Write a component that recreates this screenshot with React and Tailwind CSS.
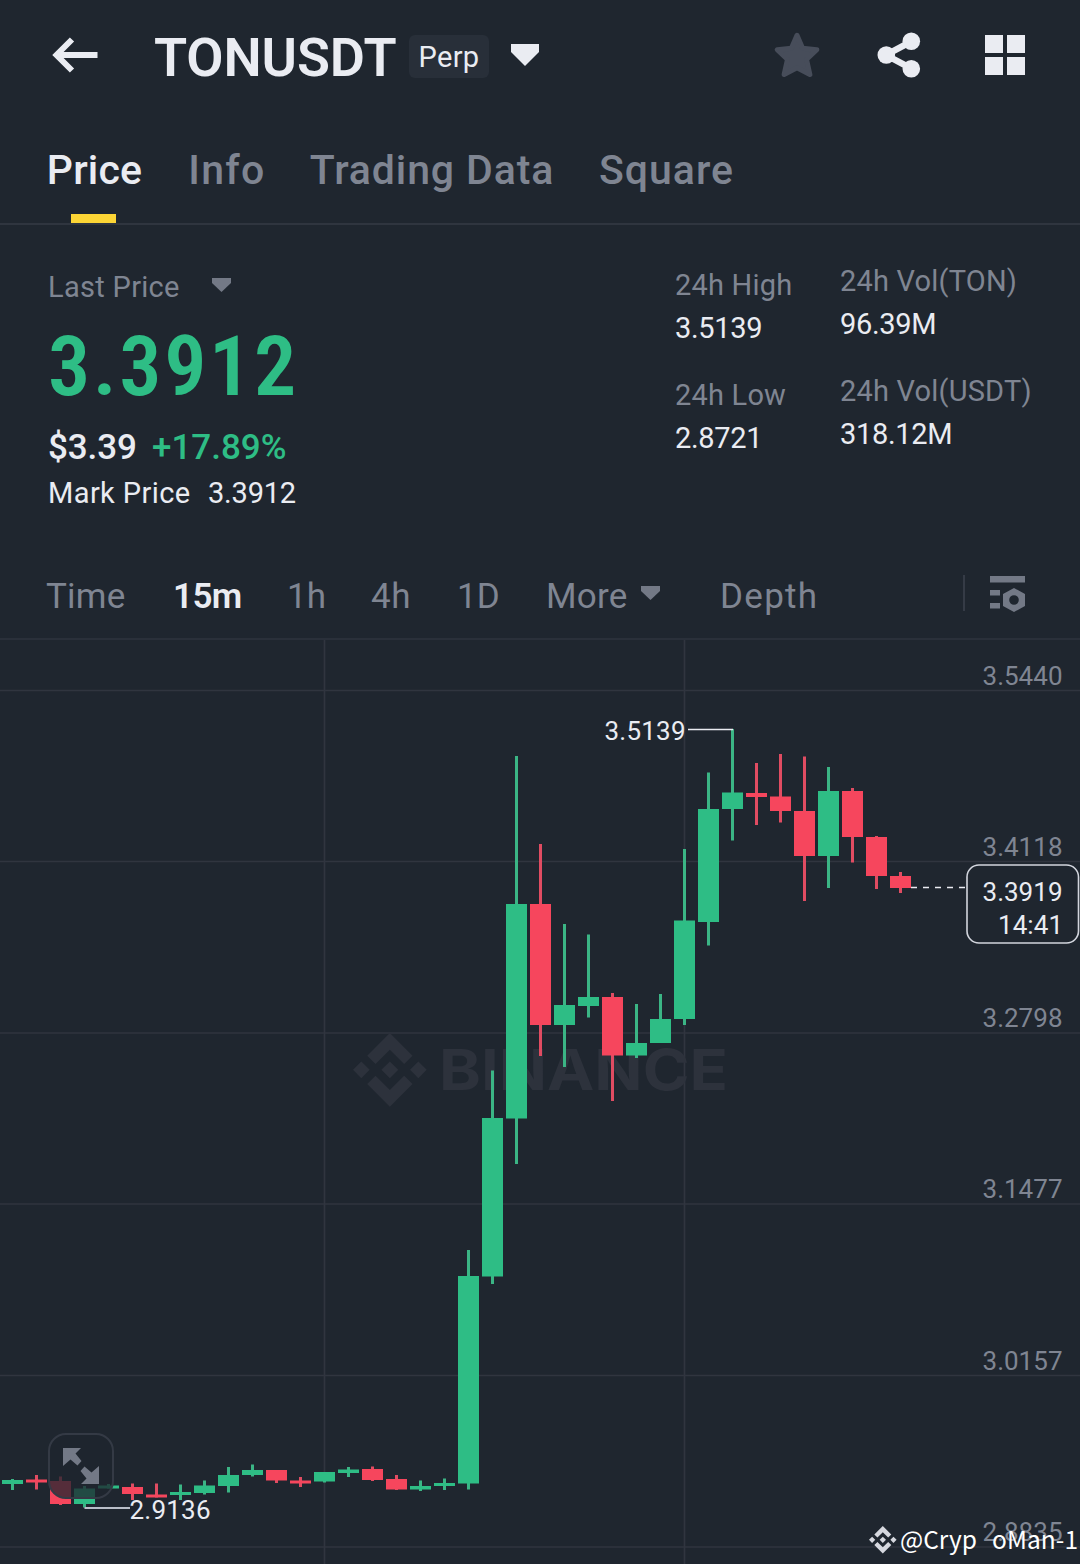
import React, { useState } from "react";

const candles = [
  // [high, body top, body bottom, low, up]
  [1479, 1480, 1484, 1490, true],
  [1475, 1479.5, 1482.5, 1489.5, false],
  [1476.5, 1481, 1504, 1505, false],
  [1486, 1488.5, 1504, 1507.5, true],
  [1484, 1485.5, 1488.5, 1488.5, true],
  [1483.5, 1487, 1494, 1500, false],
  [1483.5, 1494.5, 1497.5, 1497.5, false],
  [1484.5, 1492, 1495, 1500, true],
  [1480.5, 1485.5, 1493, 1494.5, true],
  [1467, 1475, 1486, 1492.5, true],
  [1464.5, 1470, 1475, 1476.5, true],
  [1470, 1470, 1480.5, 1483, false],
  [1477, 1480.5, 1483.5, 1487, false],
  [1472, 1472, 1481.5, 1482.5, true],
  [1467, 1469.5, 1473, 1477, true],
  [1466.5, 1469, 1480, 1481, false],
  [1475, 1479, 1489.5, 1490, false],
  [1480.5, 1486, 1489.5, 1491, true],
  [1478.5, 1483, 1486, 1490, true],
  [1250, 1276, 1483.5, 1489.5, true],
  [1070.5, 1118, 1276.5, 1284, true],
  [756, 904, 1118.5, 1164, true],
  [844, 904, 1025, 1056, false],
  [924, 1005, 1025, 1067, true],
  [934.5, 997, 1006, 1017.5, true],
  [993, 997, 1055.5, 1101, false],
  [1004, 1043, 1055.5, 1058, true],
  [994, 1019, 1043, 1043, true],
  [849, 920.5, 1019, 1025, true],
  [772.5, 809, 922, 945.5, true],
  [729, 792.5, 809, 840.5, true],
  [763, 793, 797, 825, false],
  [754, 796.5, 811, 822.5, false],
  [756.5, 811, 856, 901, false],
  [767, 791, 856, 888, true],
  [788, 791, 837, 862.5, false],
  [836, 837, 876, 889, false],
  [872, 876, 888, 893, false],
];

const axis = [
  { price: "3.5440", y: 690.5 },
  { price: "3.4118", y: 861.5 },
  { price: "3.2798", y: 1033 },
  { price: "3.1477", y: 1204 },
  { price: "3.0157", y: 1375.5 },
  { price: "2.8835", y: 1547 },
];

const BinanceMark = () => (
  <>
    <path d="M38.73 53.2l24.59-24.58 24.6 24.6 14.3-14.31L63.32 0l-38.9 38.9z" />
    <path d="M0 63.31L14.3 49l14.31 14.31-14.31 14.3z" />
    <path d="M38.73 73.41L63.32 98l24.6-24.6 14.31 14.29-38.91 38.91-38.9-38.88z" />
    <path d="M98 63.31L112.3 49l14.31 14.3-14.31 14.32z" />
    <path d="M77.83 63.3L63.32 48.78 48.81 63.28l14.51 14.5z" />
  </>
);

const Caret = ({ className }) => (
  <svg viewBox="0 0 28 22" preserveAspectRatio="none" className={className} fill="currentColor">
    <path d="M0 0h28v8L14 22 0 8z" />
  </svg>
);

const Header = () => {
  return (
    <header className="flex h-28 items-center pl-[52px]">
      <svg width="46" height="36" viewBox="0 0 46 36" className="mb-0.5 shrink-0" fill="none" stroke="currentColor" strokeWidth="6">
        <path d="M20 2.5L4.5 18 20 33.5M4 18h41.5" />
      </svg>
      <h1 className="ml-14 w-[241px] pt-1 whitespace-nowrap text-[54px] leading-[56px] font-semibold tracking-[-0.1px]">
        TONUSDT
      </h1>
      <span className="ml-3.5 flex h-[43px] w-20 items-center justify-center rounded-md bg-[#282f39] pt-1 text-[29px] tracking-[0.3px]">
        Perp
      </span>
      <Caret className="mb-0.5 ml-[22px] h-[22px] w-7" />

      <div className="mb-0.5 ml-[234px] flex items-center">
        <svg width="48" height="48" viewBox="0 0 48 48" fill="#474d5a" stroke="#474d5a" strokeWidth="5" strokeLinejoin="round">
          <path d="M24 4.3l5.6 12.9 14.2 1.5-10.3 9.6 3.4 15.2L24 36.8l-12.9 6.7 3.4-15.2L4.2 18.7l14.2-1.5z" />
        </svg>
        <svg width="44" height="46" viewBox="0 0 44 46" className="ml-14" fill="currentColor">
          <path d="M34.5 9.3L9 23l25.5 13.7" fill="none" stroke="currentColor" strokeWidth="6.5" />
          <circle cx="9.3" cy="23" r="8.8" />
          <circle cx="34.3" cy="9.2" r="8.8" />
          <circle cx="34.3" cy="36.8" r="8.8" />
        </svg>
        <div className="ml-16 grid grid-cols-2 gap-1">
          <i className="h-[18px] w-[18px] bg-current" />
          <i className="h-[18px] w-[18px] bg-current" />
          <i className="h-[18px] w-[18px] bg-current" />
          <i className="h-[18px] w-[18px] bg-current" />
        </div>
      </div>
    </header>
  );
};

const tabs = [
  { name: "Price", style: "w-[94px] mr-[47px] tracking-[0.2px]" },
  { name: "Info", style: "w-[77px] mr-[45px] tracking-[1.3px]" },
  { name: "Trading Data", style: "w-[243px] mr-[45px] tracking-[0.9px]" },
  { name: "Square", style: "w-[136px] tracking-[1px]" },
];

const Tabs = () => {
  const [active, setActive] = useState("Price");

  return (
    <nav className="flex h-[113px] items-end border-b-2 border-[#2f353f] pl-[46px] text-[41px] leading-[48px] font-medium text-[#7f8592]">
      {tabs.map((tab) => (
        <button
          key={tab.name}
          onClick={() => setActive(tab.name)}
          className={`flex flex-col items-center gap-[20px] whitespace-nowrap ${tab.style} ${active === tab.name ? "text-[#eaecf2]" : ""}`}
        >
          <span className="pl-[3px]">{tab.name}</span>
          <span className={`h-[9px] w-[45px] ${active === tab.name ? "bg-[#fcd535]" : ""}`} />
        </button>
      ))}
    </nav>
  );
};

const Stat = ({ label, value }) => (
  <div className="flex h-[110px] flex-col whitespace-nowrap text-[29px] leading-[43px]">
    <span className="tracking-[0.2px] text-[#7f8592]">{label}</span>
    <span className="tracking-[-0.3px]">{value}</span>
  </div>
);

const Summary = () => {
  return (
    <section className="flex h-[328px] justify-between pr-[41px] pl-12">
      <div className="flex flex-col whitespace-nowrap">
        <div className="mt-10 flex items-center text-[29px] leading-[44px] text-[#7f8592]">
          <span className="w-[164px] tracking-[0.3px]">Last Price</span>
          <Caret className="mb-1 h-3.5 w-[19px] text-[#737986]" />
        </div>
        <span className="mt-1.5 text-[84px] leading-[104px] font-semibold tracking-[2.6px] text-[#2ebd85] [font-stretch:87.5%]">
          3.3912
        </span>
        <div className="mt-[5px] flex text-[35px] leading-[48px] font-medium">
          <span className="w-[104px] tracking-[-0.1px]">$3.39</span>
          <span className="text-[#2ebd85]">+17.89%</span>
        </div>
        <div className="flex text-[29px] leading-[42px]">
          <span className="w-40 tracking-[0.4px]">Mark Price</span>
          <span className="tracking-[-0.2px]">3.3912</span>
        </div>
      </div>
      <div className="flex w-[365px] text-[29px]">
        <div className="mt-[39px] w-[166px] pl-px">
          <Stat label="24h High" value="3.5139" />
          <Stat label="24h Low" value="2.8721" />
        </div>
        <div className="mt-[35px]">
          <Stat label="24h Vol(TON)" value="96.39M" />
          <Stat label="24h Vol(USDT)" value="318.12M" />
        </div>
      </div>
    </section>
  );
};

const Intervals = () => {
  return (
    <div className="flex h-[87px] items-center border-b-2 border-[#2a303a] pl-[46px] text-[35px] leading-[40px] whitespace-nowrap text-[#7f8592]">
      <span className="w-[127px] pt-0.5 tracking-[0.2px]">Time</span>
      <span className="w-[114px] pt-0.5 font-semibold tracking-[-0.6px] text-[#eaecf2]">15m</span>
      <span className="w-[84px] pt-0.5">1h</span>
      <span className="w-[86px] pt-0.5 tracking-[0.5px]">4h</span>
      <span className="w-[89px] pt-0.5">1D</span>
      <span className="w-[95px] pt-0.5 tracking-[0.2px]">More</span>
      <Caret className="mb-1.5 h-3.5 w-[19px] text-[#737986]" />
      <span className="ml-[60px] w-[243px] pt-0.5 tracking-[1.3px]">Depth</span>
      <i className="mb-1.5 h-9 w-0.5 bg-[#353b46]" />
      <svg width="36" height="38" viewBox="0 0 36 38" className="mb-1 ml-[25px]" fill="#737986">
        <path d="M0 1h35v6.5H0zM0 15h10v5.5H0zM0 28h10v5.5H0z" />
        <path fillRule="evenodd" d="M24 13l11 6v12l-11 6-11-6V19zM24 20.2a4.8 4.8 0 1 0 0 9.6 4.8 4.8 0 0 0 0-9.6z" />
      </svg>
    </div>
  );
};

const Chart = () => {
  return (
    <div className="relative h-[924px]">
      <svg viewBox="0 640 1080 924" className="block h-full w-full" fontSize="26">
        <g stroke="#30353f" strokeWidth="1.7">
          {axis.map(({ y }) => (
            <line key={y} x1="0" x2="1080" y1={y} y2={y} />
          ))}
          <line x1="324.5" x2="324.5" y1="640" y2="1564" />
          <line x1="684.5" x2="684.5" y1="640" y2="1564" />
        </g>

        <g fill="#2d323c">
          <g transform="translate(353 1033) scale(0.582)">
            <BinanceMark />
          </g>
          <text
            x="439"
            y="1090"
            fontSize="56"
            fontWeight="700"
            textLength="289"
            lengthAdjust="spacingAndGlyphs"
            className="font-['Inter',sans-serif]"
          >
            BINANCE
          </text>
        </g>

        {candles.map(([high, top, bottom, low, up], i) => {
          const x = 12.5 + i * 24;
          return (
            <g key={i}>
              <rect x={x - 1.5} y={high} width="3" height={low - high} fill={up ? "#3bb585" : "#e04c62"} />
              <rect x={x - 10.5} y={top} width="21" height={bottom - top} fill={up ? "#2ebd85" : "#f6465d"} />
            </g>
          );
        })}

        <g fill="#7f8592">
          {axis.map(({ price, y }) => (
            <text key={price} x="982.5" y={y - 6} textLength="80">
              {price}
            </text>
          ))}
        </g>

        <g fill="#eaecf2">
          <text x="604.5" y="740" textLength="81">3.5139</text>
          <text x="129.5" y="1519" textLength="81">2.9136</text>
        </g>
        <path d="M688 729.5h45" stroke="#eaecf2" strokeWidth="1.6" />
        <path d="M84.5 1508H130" stroke="#b9bec8" strokeWidth="1.8" />

        <path d="M911 887.5h55" stroke="#eaecf2" strokeWidth="1.5" strokeDasharray="6 6" />
        <rect x="967" y="865" width="111.5" height="78" rx="12" fill="#1f262f" stroke="#d2d5dd" strokeWidth="1.6" />
        <g fill="#eaecf2">
          <text x="982.5" y="901" textLength="80">3.3919</text>
          <text x="998" y="934" textLength="65">14:41</text>
        </g>

        <g fill="#d6d8df" transform="translate(869 1526) scale(0.218)">
          <BinanceMark />
        </g>
        <g fill="#fff" fontSize="24.5" className="font-['Noto_Sans_CJK_SC',sans-serif]">
          <text x="900" y="1549" textLength="77">@Cryp</text>
          <text x="992" y="1549" textLength="86">oMan-1</text>
        </g>
      </svg>

      <button className="absolute top-[793px] left-12 flex h-[66px] w-[66px] items-center justify-center rounded-[18px] border-2 border-[#343a45] bg-[#1f262f]/75">
        <svg width="36" height="36" viewBox="0 0 36 36" fill="#737986">
          <path d="M0 0h18l-5.5 5.5 6 7.5-4 4.5-7-6L0 18z" />
          <path d="M36 36H18l5.5-5.5-6-7.5 4-4.500 7 6L36 18z" />
        </svg>
      </button>
    </div>
  );
};

const App = () => {
  return (
    <div className="h-[1564px] w-[1080px] overflow-hidden bg-[#1f262f] font-['Roboto',sans-serif] text-[#eaecf2]">
      <Header />
      <Tabs />
      <Summary />
      <Intervals />
      <Chart />
    </div>
  );
};

export default App;
